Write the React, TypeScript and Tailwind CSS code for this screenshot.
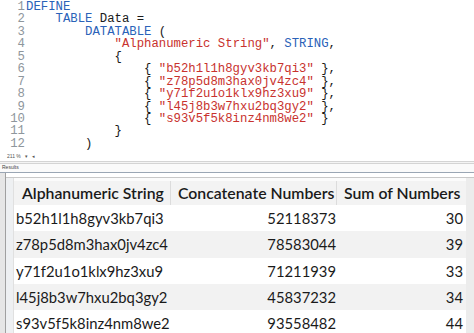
import React from "react"

type Tok = [string, "k" | "s" | "p"]

const code: Tok[][] = [
  [["DEFINE", "k"]],
  [["    ", "p"], ["TABLE", "k"], [" Data =", "p"]],
  [["        ", "p"], ["DATATABLE", "k"], [" (", "p"]],
  [["            ", "p"], ['"Alphanumeric String"', "s"], [", ", "p"], ["STRING", "k"], [",", "p"]],
  [["            {", "p"]],
  [["                { ", "p"], ['"b52h1l1h8gyv3kb7qi3"', "s"], [" },", "p"]],
  [["                { ", "p"], ['"z78p5d8m3hax0jv4zc4"', "s"], [" },", "p"]],
  [["                { ", "p"], ['"y71f2u1o1klx9hz3xu9"', "s"], [" },", "p"]],
  [["                { ", "p"], ['"l45j8b3w7hxu2bq3gy2"', "s"], [" },", "p"]],
  [["                { ", "p"], ['"s93v5f5k8inz4nm8we2"', "s"], [" }", "p"]],
  [["            }", "p"]],
  [["        )", "p"]],
]

const rows = [
  ["b52h1l1h8gyv3kb7qi3", "52118373", "30"],
  ["z78p5d8m3hax0jv4zc4", "78583044", "39"],
  ["y71f2u1o1klx9hz3xu9", "71211939", "33"],
  ["l45j8b3w7hxu2bq3gy2", "45837232", "34"],
  ["s93v5f5k8inz4nm8we2", "93558482", "44"],
]

const tokColor = {
  k: "text-[#2a62b8]",
  s: "text-[#c8322e]",
  p: "text-[#1a1a1a]",
}

export default function App() {
  return (
    <div className="w-[474px] h-[333px] overflow-hidden bg-white flex flex-col">
      {/* editor */}
      <div className="h-[152px] shrink-0 flex pt-[1px] font-['Liberation_Mono',monospace] text-[12.3px] leading-[12.45px]">
        <div className="w-[25px] flex flex-col items-end text-[#8e969c]">
          {code.map((_, i) => (
            <div key={i} className="h-[12.45px]">{i + 1}</div>
          ))}
        </div>
        <div className="pl-[1px] flex flex-col whitespace-pre">
          {code.map((line, i) => (
            <div key={i} className="h-[12.45px]">
              {line.map(([t, c], j) => (
                <span key={j} className={tokColor[c]}>
                  {t}
                </span>
              ))}
            </div>
          ))}
        </div>
      </div>
      {/* status */}
      <div className="h-[9px] shrink-0 pl-[7px] flex items-center gap-[4px] font-['Liberation_Sans',sans-serif] text-[5px] text-[#555]">
        <span>211 %</span>
        <span>▾</span>
        <span>◂</span>
      </div>
      <div className="h-[3px] shrink-0 border-t border-b border-[#d4d4d4] bg-[#f4f4f4]" />
      <div className="h-[8px] shrink-0 pl-[2px] flex items-center font-['Liberation_Sans',sans-serif] text-[5px] text-[#444] bg-[#fafafa]">
        Results
      </div>
      <div className="h-[1px] shrink-0 bg-[#9aa6b4]" />
      {/* grid */}
      <div className="flex-1 min-h-0 flex bg-[#ececec]">
        <div className="w-[5px] bg-[#e6e6e6]" />
        <div className="w-[1px] bg-[#a0a0a0]" />
        <div className="flex-1 flex flex-col bg-white pt-[4px]">
          <div className="h-[1px] shrink-0 bg-[#c8c8c8]" />
          <div className="flex-1 min-h-0 flex">
            <div className="w-[8px] bg-[#eef0f2] border-r border-[#e0e0e0]" />
            <div className="w-[452px] flex flex-col font-['Lato',sans-serif] text-[#1a1a1a] text-[14.8px] whitespace-nowrap">
              <div className="h-[27px] shrink-0 flex bg-[#f3f3f3] border-t-[3px] border-[#fbfbfb] font-semibold text-[15.8px]">
                <div className="w-[157px] pl-[8px] flex items-center border-r border-[#dcdcdc]">Alphanumeric String</div>
                <div className="w-[166px] pl-[7px] flex items-center border-r border-[#dcdcdc]">Concatenate Numbers</div>
                <div className="flex-1 pl-[7px] flex items-center">Sum of Numbers</div>
              </div>
              {rows.map((r, i) => (
                <div key={i} className={`h-[26.3px] shrink-0 flex items-center ${i % 2 === 1 ? "bg-[#f2f2f2]" : "bg-white"}`}>
                  <div className="w-[157px] pl-[2px]">{r[0]}</div>
                  <div className="w-[166px] pr-[1px] text-right">{r[1]}</div>
                  <div className="flex-1 pr-[3px] text-right">{r[2]}</div>
                </div>
              ))}
            </div>
            <div className="flex-1 bg-[#ececec]" />
          </div>
        </div>
      </div>
    </div>
  )
}
